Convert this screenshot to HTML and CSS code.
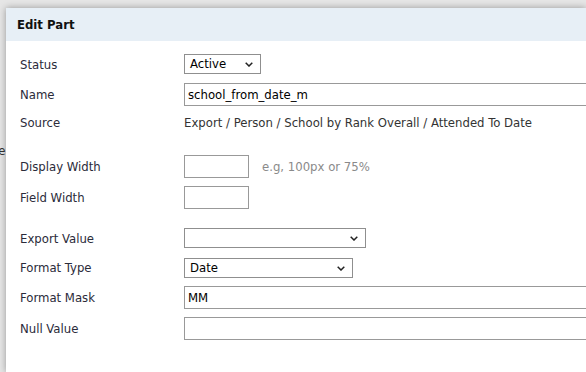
FILE: index.html
```html
<!DOCTYPE html>
<html>
<head>
<meta charset="utf-8">
<link rel="stylesheet" href="styles.css">
</head>
<body>
<div class="page"><span class="bg-text">Name</span></div>
<div class="modal">
  <div class="modal-head">Edit Part</div>
  <div class="modal-body">
    <div class="row row-sel">
      <span class="lbl">Status</span>
      <div class="sel sel-status"><span class="sel-val">Active</span><svg class="chev" viewBox="0 0 8 5"><path d="M0.7 0.7 L4 4 L7.3 0.7"/></svg></div>
    </div>
    <div class="row row-inp">
      <span class="lbl">Name</span>
      <div class="inp inp-wide">school_from_date_m</div>
    </div>
    <div class="row row-text">
      <span class="lbl">Source</span>
      <span class="val">Export / Person / School by Rank Overall / Attended To Date</span>
    </div>
    <div class="spacer spacer-a"></div>
    <div class="row row-inp">
      <span class="lbl">Display Width</span>
      <div class="inp inp-small"></div>
      <span class="hint">e.g, 100px or 75%</span>
    </div>
    <div class="row row-inp">
      <span class="lbl">Field Width</span>
      <div class="inp inp-small"></div>
    </div>
    <div class="spacer spacer-b"></div>
    <div class="row row-sel">
      <span class="lbl">Export Value</span>
      <div class="sel sel-export"><span class="sel-val"></span><svg class="chev" viewBox="0 0 8 5"><path d="M0.7 0.7 L4 4 L7.3 0.7"/></svg></div>
    </div>
    <div class="row row-sel">
      <span class="lbl">Format Type</span>
      <div class="sel sel-format"><span class="sel-val">Date</span><svg class="chev" viewBox="0 0 8 5"><path d="M0.7 0.7 L4 4 L7.3 0.7"/></svg></div>
    </div>
    <div class="row row-inp">
      <span class="lbl">Format Mask</span>
      <div class="inp inp-wide">MM</div>
    </div>
    <div class="row row-inp">
      <span class="lbl">Null Value</span>
      <div class="inp inp-wide"></div>
    </div>
  </div>
</div>
</body>
</html>
```

FILE: styles.css
```css
html, body {
  margin: 0;
  padding: 0;
  width: 586px;
  height: 372px;
  overflow: hidden;
}
body {
  background: #e6e6e6;
  font-family: "DejaVu Sans Condensed", "DejaVu Sans", sans-serif;
  font-size: 13px;
  color: #2a2a35;
  position: relative;
}
.page {
  height: 372px;
  padding-top: 143px;
  box-sizing: border-box;
}
.bg-text {
  display: inline-block;
  margin-left: -29px;
  color: #333;
}
.modal {
  position: absolute;
  left: 6px;
  top: 8px;
  width: 580px;
  height: 364px;
  overflow: hidden;
  background: #fff;
  box-shadow: 0 0 7px rgba(0, 0, 0, 0.35);
}
.modal-head {
  height: 33px;
  background: #e7eff6;
  font-weight: bold;
  font-size: 13px;
  color: #111;
  padding-left: 11px;
  line-height: 33px;
}
.modal-body {
  padding: 8px 0 0 14px;
  display: flex;
  flex-direction: column;
}
.row {
  display: flex;
  align-items: center;
}
.row-sel { height: 30px; }
.row-sel + .row-sel { height: 29px; }
.row-inp { height: 31px; }
.row-text { height: 25px; }
.spacer-a { height: 16px; }
.spacer-b { height: 10px; }
.lbl {
  width: 164px;
  flex: none;
  color: #2b2b3a;
}
.val {
  color: #333;
}
.hint {
  color: #8a8a8a;
  margin-left: 13px;
}
.inp {
  box-sizing: border-box;
  height: 23px;
  border: 1px solid #999;
  padding: 0 3px;
  line-height: 21px;
  color: #000;
  flex: none;
}
.inp-wide { width: 440px; }
.inp-small { width: 65px; }
.sel {
  position: relative;
  box-sizing: border-box;
  height: 20px;
  border: 1px solid #8f8f8f;
  padding: 0 0 0 5px;
  line-height: 18px;
  color: #000;
  flex: none;
}
.sel-status { width: 77px; }
.sel-export { width: 182px; }
.sel-format { width: 169px; }
.chev {
  position: absolute;
  right: 7px;
  top: 7px;
  width: 8px;
  height: 5px;
  fill: none;
  stroke: #222;
  stroke-width: 1.5;
}
```
